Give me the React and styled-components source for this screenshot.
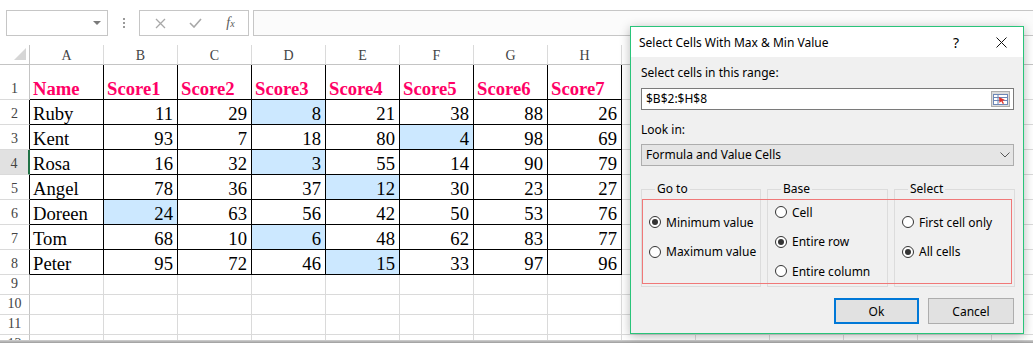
import React from "react";
import styled, { createGlobalStyle } from "styled-components";

const GlobalStyle = createGlobalStyle`
  html, body {
    margin: 0;
    padding: 0;
    background: #ffffff;
    overflow: hidden;
  }
  * {
    box-sizing: border-box;
  }
`;

const Screen = styled.div`
  position: relative;
  width: 1033px;
  height: 343px;
  overflow: hidden;
  display: flex;
  flex-direction: column;
  background: #ffffff;
`;

/* ---------- formula bar ---------- */

const FormulaBar = styled.div`
  flex: none;
  height: 45px;
  display: flex;
  align-items: flex-start;
  padding: 10px 0 0 6px;
`;

const NameBox = styled.div`
  width: 102px;
  height: 26px;
  border: 1px solid #c6c6c6;
  background: #ffffff;
  display: flex;
  align-items: center;
  justify-content: flex-end;
  padding-right: 6px;
`;

const Caret = styled.span`
  width: 0;
  height: 0;
  border-left: 4px solid transparent;
  border-right: 4px solid transparent;
  border-top: 4px solid #7a7a7a;
`;

const Grip = styled.div`
  width: 31px;
  height: 26px;
  display: flex;
  flex-direction: column;
  align-items: center;
  justify-content: center;
  gap: 2px;
  span {
    width: 2px;
    height: 2px;
    background: #9a9a9a;
  }
`;

const FxGroup = styled.div`
  width: 110px;
  height: 26px;
  border: 1px solid #c6c6c6;
  display: flex;
  align-items: center;
  padding-left: 3px;
`;

const FxSlot = styled.div`
  width: 35px;
  display: flex;
  justify-content: center;
  align-items: center;
`;

const FxText = styled.span`
  font-family: "Liberation Serif", serif;
  font-style: italic;
  font-size: 14px;
  color: #5a5a5a;
  sub {
    font-size: 10px;
    vertical-align: baseline;
  }
`;

const FormulaInput = styled.div`
  flex: 1;
  margin-left: 4px;
  height: 26px;
  border: 1px solid #c6c6c6;
  border-right: none;
  background: #fbfbfb;
`;

/* ---------- sheet ---------- */

const Sheet = styled.div`
  flex: 1;
  overflow: hidden;
  display: grid;
  grid-template-columns: 30px repeat(14, 74px);
  grid-template-rows: 20px 35px repeat(7, 25px) repeat(5, 20px);
  font-family: "Liberation Serif", "Times New Roman", serif;
`;

const Corner = styled.div`
  border-right: 1px solid #c4c4c4;
  border-bottom: 1px solid #c4c4c4;
  display: flex;
  align-items: flex-end;
  justify-content: flex-end;
  padding: 0 3px 4px 0;
`;

const ColHead = styled.div`
  border-right: 1px solid #dadada;
  border-bottom: 1px solid #c4c4c4;
  display: flex;
  align-items: center;
  justify-content: center;
  padding-top: 2px;
  font-size: 14px;
  color: #444444;
`;

const RowHead = styled.div`
  border-right: ${p => (p.$active ? "2px solid #217346" : p.$edge ? "1px solid #000000" : "1px solid #c4c4c4")};
  border-bottom: 1px solid #dadada;
  background: ${p => (p.$active ? "#e1e1e1" : "#ffffff")};
  display: flex;
  align-items: flex-end;
  justify-content: center;
  padding-bottom: 2px;
  font-size: 14px;
  line-height: 16px;
  color: #444444;
`;

const Cell = styled.div`
  border-right: 1px solid ${p => (p.$edge ? "#000000" : "#dadada")};
  border-bottom: 1px solid ${p => (p.$edge ? "#000000" : "#dadada")};
  background: ${p => (p.$low ? "#cce8ff" : "#ffffff")};
  display: flex;
  align-items: flex-end;
  justify-content: ${p => (p.$num ? "flex-end" : "flex-start")};
  padding: 0 4px 0 3px;
  font-size: 18.67px;
  line-height: 20px;
  font-weight: ${p => (p.$head ? 700 : 400)};
  color: ${p => (p.$head ? "#ff0066" : "#000000")};
  white-space: nowrap;
  overflow: hidden;
`;

const BottomEdge = styled.div`
  flex: none;
  height: 3px;
  background: linear-gradient(#d2d2d2, #9c9c9c);
`;

/* ---------- dialog ---------- */

const Dialog = styled.div`
  position: absolute;
  left: 630px;
  top: 26px;
  width: 394px;
  height: 308px;
  border: 1px solid #29c47a;
  background: #f0f0f0;
  box-shadow: 0 2px 10px rgba(0, 0, 0, 0.28);
  font-family: "Noto Sans", "Segoe UI", sans-serif;
  font-size: 12px;
  color: #000000;
  display: flex;
  flex-direction: column;
`;

const TitleBar = styled.div`
  height: 30px;
  flex: none;
  background: #ffffff;
  display: flex;
  align-items: center;
  padding-left: 8px;
`;

const Title = styled.div`
  flex: 1;
`;

const HelpBtn = styled.div`
  width: 22px;
  margin-right: 12px;
  text-align: center;
  font-size: 14px;
`;

const CloseBtn = styled.div`
  width: 44px;
  display: flex;
  justify-content: center;
  align-items: center;
`;

const Body = styled.div`
  flex: 1;
  padding: 0 9px 0 10px;
  display: flex;
  flex-direction: column;
`;

const Label = styled.div`
  line-height: 16px;
  margin-top: ${p => p.$gap}px;
`;

const Field = styled.div`
  margin-top: ${p => p.$gap}px;
  height: 22px;
  border: 1px solid ${p => (p.$select ? "#adadad" : "#7a7a7a")};
  background: ${p => (p.$select ? "#e5e5e5" : "#ffffff")};
  display: flex;
  align-items: center;
  justify-content: space-between;
  padding: 0 3px 0 4px;
  line-height: 16px;
`;

const RangeBtn = styled.div`
  width: 19px;
  height: 16px;
  border: 1px solid #adadad;
  background: #dcdcdc;
  display: flex;
  align-items: center;
  justify-content: center;
`;

const Groups = styled.div`
  margin-top: 15px;
  display: grid;
  grid-template-columns: 120px 121px 121px;
  gap: 6px;
`;

const Group = styled.fieldset`
  margin: 0;
  min-width: 0;
  height: 106px;
  border: 1px solid #dcdcdc;
  padding: ${p => p.$top}px 0 0 7px;
  display: flex;
  flex-direction: column;
  gap: 11.5px;
`;

const Legend = styled.legend`
  margin-left: 6px;
  padding: 0 2px;
  line-height: 16px;
`;

const Option = styled.div`
  height: 18px;
  display: flex;
  align-items: center;
  gap: 5px;
  white-space: nowrap;
`;

const Radio = styled.span`
  width: 12px;
  height: 12px;
  border-radius: 50%;
  border: 1px solid #333333;
  background: #ffffff;
  display: flex;
  align-items: center;
  justify-content: center;
  &::after {
    content: "";
    width: 6px;
    height: 6px;
    border-radius: 50%;
    background: ${p => (p.$on ? "#333333" : "transparent")};
  }
`;

const Actions = styled.div`
  margin-top: 11px;
  display: flex;
  justify-content: flex-end;
  gap: 9px;
`;

const Button = styled.div`
  width: ${p => p.$w}px;
  height: 26px;
  border: ${p => (p.$primary ? "2px solid #0078d7" : "1px solid #adadad")};
  background: #e1e1e1;
  display: flex;
  align-items: center;
  justify-content: center;
`;

const Marker = styled.div`
  position: absolute;
  left: 11px;
  top: 172px;
  width: 370px;
  height: 85px;
  border: 1px solid #f07878;
  pointer-events: none;
`;

/* ---------- data ---------- */

// only A..H carry a letter; the columns beyond sit under the dialog
const letters = ["A", "B", "C", "D", "E", "F", "G", "H", "", "", "", "", "", ""];
const headers = ["Name", "Score1", "Score2", "Score3", "Score4", "Score5", "Score6", "Score7"];
const people = [
  ["Ruby", 11, 29, 8, 21, 38, 88, 26],
  ["Kent", 93, 7, 18, 80, 4, 98, 69],
  ["Rosa", 16, 32, 3, 55, 14, 90, 79],
  ["Angel", 78, 36, 37, 12, 30, 23, 27],
  ["Doreen", 24, 63, 56, 42, 50, 53, 76],
  ["Tom", 68, 10, 6, 48, 62, 83, 77],
  ["Peter", 95, 72, 46, 15, 33, 97, 96],
];
const blankRows = [9, 10, 11, 12];

const groups = [
  { title: "Go to", top: 16, options: [["Minimum value", true], ["Maximum value", false]] },
  { title: "Base", top: 6, options: [["Cell", false], ["Entire row", true], ["Entire column", false]] },
  { title: "Select", top: 16, options: [["First cell only", false], ["All cells", true]] },
];

const CancelIcon = () => (
  <svg width="11" height="11" viewBox="0 0 11 11">
    <path d="M1 1 L10 10 M10 1 L1 10" stroke="#a8a8a8" strokeWidth="1.3" fill="none" />
  </svg>
);

const CheckIcon = () => (
  <svg width="13" height="10" viewBox="0 0 13 10">
    <path d="M1 5 L5 9 L12 1" stroke="#a8a8a8" strokeWidth="1.6" fill="none" />
  </svg>
);

const CornerMark = () => (
  <svg width="12" height="12" viewBox="0 0 12 12">
    <path d="M12 0 L12 12 L0 12 Z" fill="#d6d6d6" />
  </svg>
);

const RangeIcon = () => (
  <svg width="15" height="11" viewBox="0 0 15 11">
    <rect x="0.5" y="0.5" width="14" height="10" fill="#ffffff" stroke="#6d87b6" />
    <path d="M1 3.5 H14 M1 6.5 H14 M5 1 V10" stroke="#6d87b6" strokeWidth="1" />
    <path d="M6 3 L12 6 L9.5 6.8 L11 9.5 L9.8 10 L8.3 7.3 L6.5 9 Z" fill="#e0322a" />
  </svg>
);

const CloseIcon = () => (
  <svg width="11" height="11" viewBox="0 0 11 11">
    <path d="M0.5 0.5 L10.5 10.5 M10.5 0.5 L0.5 10.5" stroke="#111111" strokeWidth="1" fill="none" />
  </svg>
);

const Chevron = () => (
  <svg width="10" height="6" viewBox="0 0 10 6">
    <path d="M0.5 0.5 L5 5 L9.5 0.5" stroke="#555555" strokeWidth="1" fill="none" />
  </svg>
);

const App = () => {
  const renderDataRows = () =>
    people.map((row, i) => {
      const low = Math.min(...row.slice(1));
      return (
        <React.Fragment key={row[0]}>
          <RowHead $edge $active={i === 2}>{i + 2}</RowHead>
          {letters.map((l, c) => {
            if (c > 7) return <Cell key={c} />;
            const v = row[c];
            return (
              <Cell key={c} $edge $num={c > 0} $low={c > 0 && v === low}>
                {v}
              </Cell>
            );
          })}
        </React.Fragment>
      );
    });

  return (
    <Screen>
      <GlobalStyle />
      <FormulaBar>
        <NameBox>
          <Caret />
        </NameBox>
        <Grip>
          <span />
          <span />
          <span />
        </Grip>
        <FxGroup>
          <FxSlot>
            <CancelIcon />
          </FxSlot>
          <FxSlot>
            <CheckIcon />
          </FxSlot>
          <FxSlot>
            <FxText>
              f<sub>x</sub>
            </FxText>
          </FxSlot>
        </FxGroup>
        <FormulaInput />
      </FormulaBar>

      <Sheet>
        <Corner>
          <CornerMark />
        </Corner>
        {letters.map((l, c) => (
          <ColHead key={c}>{l}</ColHead>
        ))}

        <RowHead>1</RowHead>
        {letters.map((l, c) =>
          c < 8 ? (
            <Cell key={c} $edge $head>
              {headers[c]}
            </Cell>
          ) : (
            <Cell key={c} />
          )
        )}

        {renderDataRows()}

        {blankRows.map(n => (
          <React.Fragment key={n}>
            <RowHead>{n}</RowHead>
            {letters.map((l, c) => (
              <Cell key={c} />
            ))}
          </React.Fragment>
        ))}
      </Sheet>
      <BottomEdge />

      <Dialog>
        <TitleBar>
          <Title>Select Cells With Max &amp; Min Value</Title>
          <HelpBtn>?</HelpBtn>
          <CloseBtn>
            <CloseIcon />
          </CloseBtn>
        </TitleBar>
        <Body>
          <Label $gap={8}>Select cells in this range:</Label>
          <Field $gap={7}>
            <span>$B$2:$H$8</span>
            <RangeBtn>
              <RangeIcon />
            </RangeBtn>
          </Field>
          <Label $gap={12}>Look in:</Label>
          <Field $gap={6} $select>
            <span>Formula and Value Cells</span>
            <Chevron />
          </Field>
          <Groups>
            {groups.map(g => (
              <Group key={g.title} $top={g.top}>
                <Legend>{g.title}</Legend>
                {g.options.map(([text, on]) => (
                  <Option key={text}>
                    <Radio $on={on} />
                    {text}
                  </Option>
                ))}
              </Group>
            ))}
          </Groups>
          <Actions>
            <Button $primary $w={85}>Ok</Button>
            <Button $w={86}>Cancel</Button>
          </Actions>
        </Body>
        <Marker />
      </Dialog>
    </Screen>
  );
};

export default App;
